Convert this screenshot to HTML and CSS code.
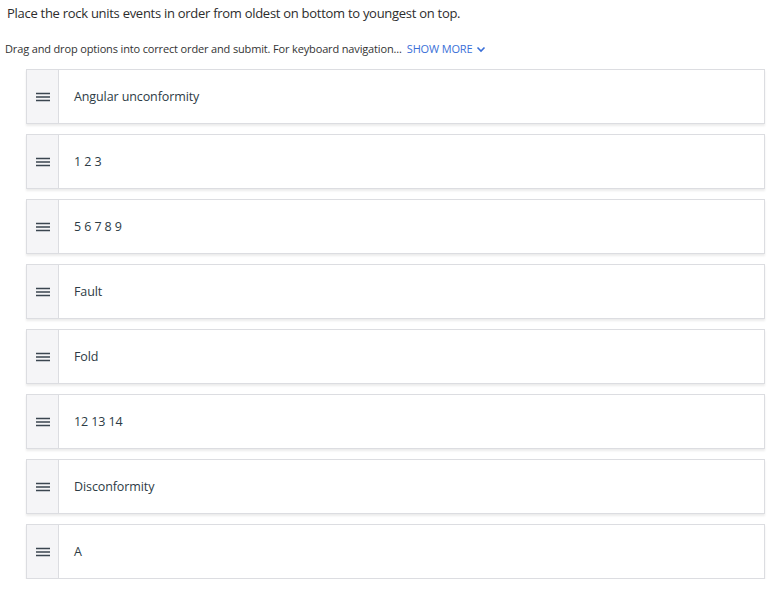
FILE: index.html
```html
<!DOCTYPE html>
<html>
<head>
<meta charset="utf-8">
<link rel="stylesheet" href="styles.css">
</head>
<body>
<div class="page">
  <p class="prompt">Place the rock units events in order from oldest on bottom to youngest on top.</p>
  <p class="help">Drag and drop options into correct order and submit. For keyboard navigation... <span class="more">SHOW MORE <svg width="10" height="8" viewBox="0 0 10 8"><path d="M1.5 2.5 L5 6 L8.5 2.5" fill="none" stroke="#3a6fd8" stroke-width="1.6"/></svg></span></p>
  <ul class="list">
    <li class="item"><span class="handle"><svg width="14" height="10" viewBox="0 0 14 10"><path d="M0 1.5H14M0 5H14M0 8.5H14" stroke="#3b4650" stroke-width="1.6"/></svg></span><span class="label">Angular unconformity</span></li>
    <li class="item"><span class="handle"><svg width="14" height="10" viewBox="0 0 14 10"><path d="M0 1.5H14M0 5H14M0 8.5H14" stroke="#3b4650" stroke-width="1.6"/></svg></span><span class="label">1 2 3</span></li>
    <li class="item"><span class="handle"><svg width="14" height="10" viewBox="0 0 14 10"><path d="M0 1.5H14M0 5H14M0 8.5H14" stroke="#3b4650" stroke-width="1.6"/></svg></span><span class="label">5 6 7 8 9</span></li>
    <li class="item"><span class="handle"><svg width="14" height="10" viewBox="0 0 14 10"><path d="M0 1.5H14M0 5H14M0 8.5H14" stroke="#3b4650" stroke-width="1.6"/></svg></span><span class="label">Fault</span></li>
    <li class="item"><span class="handle"><svg width="14" height="10" viewBox="0 0 14 10"><path d="M0 1.5H14M0 5H14M0 8.5H14" stroke="#3b4650" stroke-width="1.6"/></svg></span><span class="label">Fold</span></li>
    <li class="item"><span class="handle"><svg width="14" height="10" viewBox="0 0 14 10"><path d="M0 1.5H14M0 5H14M0 8.5H14" stroke="#3b4650" stroke-width="1.6"/></svg></span><span class="label">12 13 14</span></li>
    <li class="item"><span class="handle"><svg width="14" height="10" viewBox="0 0 14 10"><path d="M0 1.5H14M0 5H14M0 8.5H14" stroke="#3b4650" stroke-width="1.6"/></svg></span><span class="label">Disconformity</span></li>
    <li class="item"><span class="handle"><svg width="14" height="10" viewBox="0 0 14 10"><path d="M0 1.5H14M0 5H14M0 8.5H14" stroke="#3b4650" stroke-width="1.6"/></svg></span><span class="label">A</span></li>
  </ul>
</div>
</body>
</html>
```

FILE: styles.css
```css
* { box-sizing: border-box; }
html, body { margin: 0; padding: 0; background: #fff; }
body { font-family: "Open Sans", "Liberation Sans", sans-serif; color: #333; }
.page { padding: 4px 7px 0 7px; }
.prompt { margin: 0; font-size: 13px; line-height: 18px; color: #2d2d2d; letter-spacing: -0.28px; }
.help { margin: 20px 0 0 -2px; font-size: 11px; line-height: 14px; color: #333; letter-spacing: -0.15px; display: flex; align-items: center; }
.more { color: #3a6fd8; margin-left: 5px; display: inline-flex; align-items: center; gap: 4px; }
.list { list-style: none; margin: 13px 0 0 19px; padding: 0; width: 739px; display: flex; flex-direction: column; gap: 10px; }
.item { display: flex; height: 55px; border: 1px solid #dcdde1; background: #fff; box-shadow: 0 2px 2px rgba(0,0,0,0.08); }
.handle { width: 32px; flex: none; background: #f5f5f7; border-right: 1px solid #dcdde1; display: flex; align-items: center; justify-content: center; }
.label { display: flex; align-items: center; padding-left: 15px; font-size: 12.5px; color: #2d3b45; letter-spacing: -0.1px; }
```
